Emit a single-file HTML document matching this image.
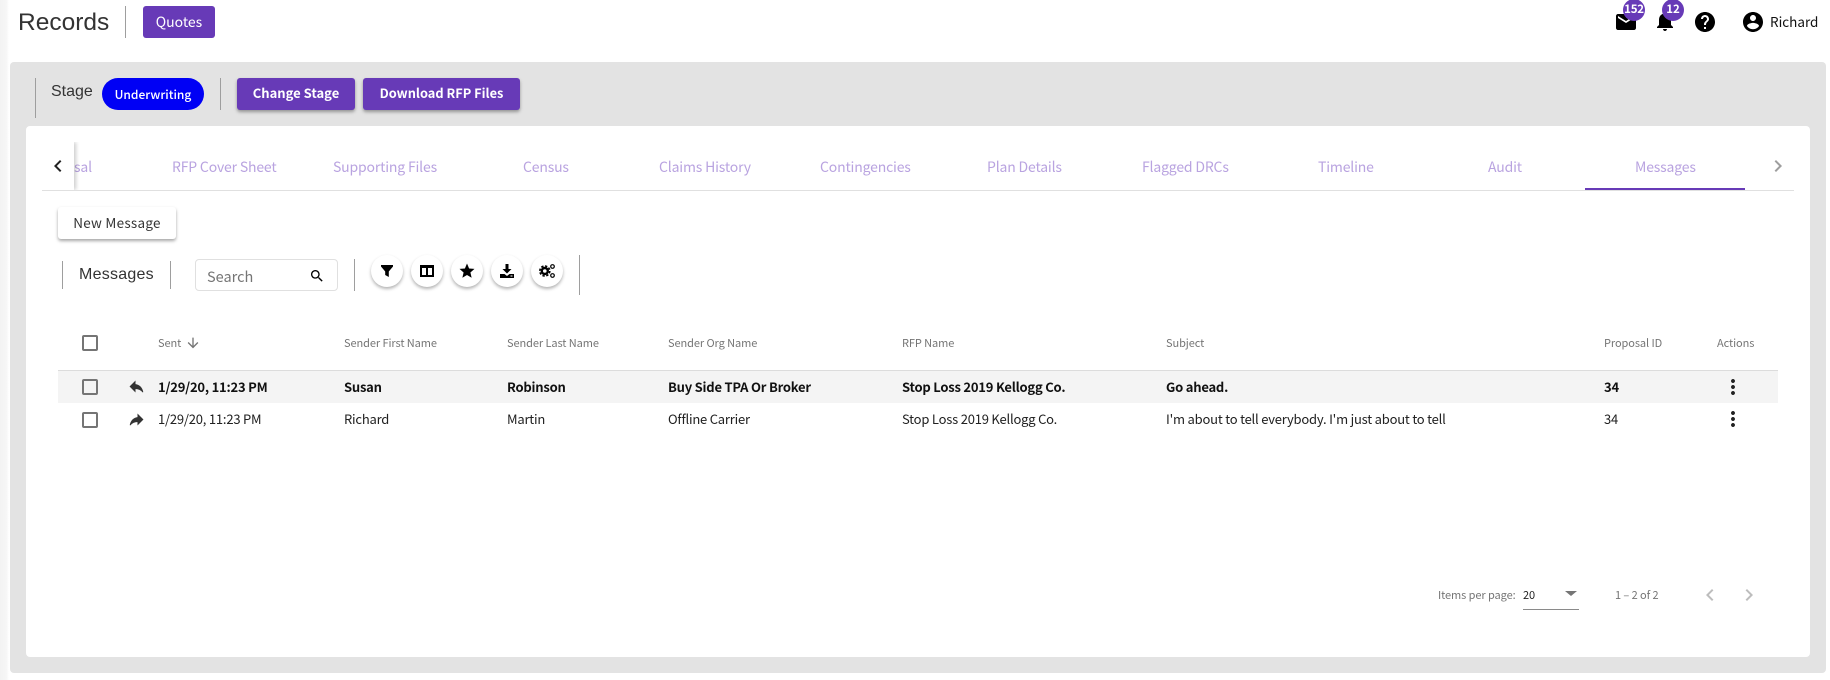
<!DOCTYPE html>
<html><head><meta charset="utf-8"><title>Records</title>
<style>
html,body{margin:0;padding:0;width:1830px;height:680px;overflow:hidden;background:#fff}
*{box-sizing:border-box}
body{position:relative;font-family:"Noto Sans CJK JP","Liberation Sans",sans-serif;color:#212121}
.a{position:absolute;white-space:nowrap}
.t{position:absolute;white-space:nowrap;line-height:20px;height:20px}
.btn{position:absolute;background:#673ab7;color:#fff;border-radius:3px;text-align:center;font-weight:500}
.sh{box-shadow:0 2px 3px rgba(0,0,0,.35)}
.div{position:absolute;width:1px;background:#9e9e9e}
.tab{position:absolute;top:157px;height:20px;line-height:20px;font-size:14px;color:#b9a3e0;white-space:nowrap;letter-spacing:-.17px}
.circ{position:absolute;top:255px;width:32px;height:32px;border-radius:50%;background:#fff;box-shadow:0 2px 3px rgba(0,0,0,.3)}
.circ svg{position:absolute;left:7px;top:7px;width:18px;height:18px}
.cb{position:absolute;left:82px;width:16px;height:16px;border:2px solid #757575;border-radius:2px}
.th{position:absolute;top:333px;height:20px;line-height:20px;font-size:11px;color:#757575;white-space:nowrap;letter-spacing:-.08px}
.td{position:absolute;height:20px;line-height:20px;font-size:13px;color:#212121;white-space:nowrap;letter-spacing:-.21px}
.b{font-weight:700;color:#111;letter-spacing:-.22px}
svg{position:absolute;display:block}
</style></head><body>
<div class="a" style="left:0;top:0;width:9px;height:680px;background:linear-gradient(90deg,#f3f3f3,#f6f6f6 70%,#fff)"></div>
<div class="t" style="left:18px;top:7px;height:32px;line-height:32px;font-family:'Liberation Sans',sans-serif;font-size:24.500px;color:#333">Records</div>
<div class="div" style="left:125px;top:6px;height:32px"></div>
<div class="btn" style="left:143px;top:6px;width:72px;height:32px;line-height:33px;font-size:14px;font-weight:400">Quotes</div>

<svg style="left:1614px;top:10px" width="24" height="24" viewBox="0 0 24 24"><path d="M20 4H4c-1.100 0-1.990.9-1.990 2L2 18c0 1.100.9 2 2 2h16c1.100 0 2-.9 2-2V6c0-1.100-.9-2-2-2zm0 4l-8 5-8-5V6l8 5 8-5v2z"/></svg>
<div class="a" style="left:1623px;top:-1px;width:22px;height:22px;border-radius:50%;background:#673ab7;color:#fff;font-size:11.500px;font-weight:700;text-align:center;line-height:21px;letter-spacing:-.2px">152</div>
<svg style="left:1653px;top:9px" width="24" height="24" viewBox="0 0 24 24"><path d="M12 22c1.100 0 2-.9 2-2h-4c0 1.100.89 2 2 2zm6-6v-5c0-3.070-1.640-5.640-4.500-6.320V4c0-.83-.67-1.500-1.500-1.500s-1.500.67-1.500 1.500v.68C7.630 5.360 6 7.920 6 11v5l-2 2v1h16v-1l-2-2z"/></svg>
<div class="a" style="left:1662px;top:-1px;width:22px;height:22px;border-radius:50%;background:#673ab7;color:#fff;font-size:11.500px;font-weight:700;text-align:center;line-height:21px">12</div>
<svg style="left:1693px;top:10px" width="24" height="24" viewBox="0 0 24 24"><path d="M12 2C6.480 2 2 6.480 2 12s4.480 10 10 10 10-4.480 10-10S17.520 2 12 2zm1 17h-2v-2h2v2zm2.070-7.750l-.9.92C13.450 12.900 13 13.500 13 15h-2v-.5c0-1.100.45-2.100 1.170-2.830l1.240-1.260c.37-.36.59-.86.59-1.410 0-1.100-.9-2-2-2s-2 .9-2 2H8c0-2.210 1.790-4 4-4s4 1.790 4 4c0 .88-.36 1.680-.93 2.250z"/></svg>
<svg style="left:1741px;top:10px" width="24" height="24" viewBox="0 0 24 24"><path d="M12 2C6.480 2 2 6.480 2 12s4.480 10 10 10 10-4.480 10-10S17.520 2 12 2zm0 3c1.660 0 3 1.340 3 3s-1.340 3-3 3-3-1.340-3-3 1.340-3 3-3zm0 14.200c-2.500 0-4.710-1.280-6-3.220.03-1.990 4-3.080 6-3.080 1.990 0 5.970 1.090 6 3.080-1.290 1.940-3.500 3.220-6 3.220z"/></svg>
<div class="t" style="left:1770px;top:11px;font-size:13.500px;color:#111">Richard</div>

<div class="a" style="left:10px;top:62px;width:1816px;height:611px;background:#e3e3e3;border-radius:4px"></div>
<div class="div" style="left:35px;top:78px;height:40px"></div>
<div class="t" style="left:51px;top:82px;font-family:'Liberation Sans',sans-serif;font-size:16px;color:#333">Stage</div>
<div class="a" style="left:102px;top:78px;width:102px;height:32px;border-radius:16px;background:#0000f5;color:#fff;font-size:12px;font-weight:500;text-align:center;line-height:33px">Underwriting</div>
<div class="div" style="left:220px;top:78px;height:32px"></div>
<div class="btn sh" style="left:237px;top:78px;width:118px;height:32px;line-height:30px;font-size:13px;font-weight:700">Change Stage</div>
<div class="btn sh" style="left:363px;top:78px;width:157px;height:32px;line-height:30px;font-size:12.800px;font-weight:700">Download RFP Files</div>

<div class="a" style="left:26px;top:126px;width:1784px;height:531px;background:#fff;border-radius:4px"></div>
<div class="a" style="left:42px;top:190px;width:1752px;height:1px;background:#e0e0e0"></div>
<div class="tab" style="left:74px">sal</div>
<div class="a" style="left:42px;top:142px;width:32px;height:48px;background:#fff;box-shadow:2px 0 4px rgba(0,0,0,.2);clip-path:inset(0 -8px 0 0)"></div>
<svg style="left:46px;top:154px" width="24" height="24" viewBox="0 0 24 24"><path d="M15.410 7.410L14 6l-6 6 6 6 1.410-1.410L10.830 12z" fill="#222"/></svg>
<div class="tab" style="left:172px">RFP Cover Sheet</div>
<div class="tab" style="left:333px">Supporting Files</div>
<div class="tab" style="left:523px">Census</div>
<div class="tab" style="left:659px">Claims History</div>
<div class="tab" style="left:820px">Contingencies</div>
<div class="tab" style="left:987px">Plan Details</div>
<div class="tab" style="left:1142px">Flagged DRCs</div>
<div class="tab" style="left:1318px">Timeline</div>
<div class="tab" style="left:1488px">Audit</div>
<div class="tab" style="left:1635px">Messages</div>
<div class="a" style="left:1585px;top:188px;width:160px;height:2px;background:#673ab7"></div>
<svg style="left:1766px;top:154px" width="24" height="24" viewBox="0 0 24 24"><path d="M10 6L8.590 7.410 13.170 12l-4.580 4.590L10 18l6-6z" fill="#9e9e9e"/></svg>

<div class="a sh" style="left:58px;top:207px;width:118px;height:32px;background:#fff;border-radius:3px;text-align:center;line-height:30px;font-size:13.500px;letter-spacing:.25px;color:#333">New Message</div>

<div class="div" style="left:62px;top:261px;height:28px"></div>
<div class="t" style="left:79px;top:265px;font-family:'Liberation Sans',sans-serif;font-size:16px;letter-spacing:.25px;color:#333">Messages</div>
<div class="div" style="left:170px;top:261px;height:28px"></div>
<div class="a" style="left:195px;top:259px;width:143px;height:32px;border:1px solid #e0e0e0;border-radius:4px"></div>
<div class="t" style="left:207px;top:267px;font-size:14.500px;color:#757575">Search</div>
<svg style="left:309px;top:268px" width="16" height="16" viewBox="0 0 24 24"><path d="M15.500 14h-.79l-.28-.27C15.410 12.590 16 11.110 16 9.500 16 5.910 13.090 3 9.500 3S3 5.910 3 9.500 5.910 16 9.500 16c1.610 0 3.090-.59 4.230-1.570l.27.28v.79l5 4.990L20.490 19l-4.990-5zm-6 0C7.010 14 5 11.990 5 9.500S7.010 5 9.500 5 14 7.010 14 9.500 11.990 14 9.500 14z"/></svg>
<div class="div" style="left:354px;top:259px;height:32px"></div>

<div class="circ" style="left:371px"><svg viewBox="0 0 18 18"><path d="M3 3h12v1.500L10.800 9.500V15L7.200 13V9.500L3 4.500z"/></svg></div>
<div class="circ" style="left:411px"><svg viewBox="0 0 18 18"><path d="M2 3h14v12H2zm2 3v7h4V6zm6 0v7h4V6z" fill-rule="evenodd"/></svg></div>
<div class="circ" style="left:451px"><svg viewBox="0 0 24 24"><path d="M12 17.270L18.180 21l-1.640-7.030L22 9.240l-7.190-.61L12 2 9.190 8.630 2 9.240l5.460 4.730L5.820 21z"/></svg></div>
<div class="circ" style="left:491px"><svg viewBox="0 0 18 18"><path d="M7.500 2h3v5h3L9 11.500 4.500 7h3zM2 12h4.500L9 14l2.500-2H16v4H2zm10.500 1.500v1h2v-1z" fill-rule="evenodd"/></svg></div>
<div class="circ" style="left:531px"><svg viewBox="0 0 18 18"><circle cx="6.800" cy="9" r="3" fill="none" stroke="#000" stroke-width="2.400"/><circle cx="6.800" cy="9" r="5" fill="none" stroke="#000" stroke-width="1.600" stroke-dasharray="2.400 1.530"/><circle cx="14.500" cy="4.500" r="1.800" fill="none" stroke="#000" stroke-width="1.200"/><circle cx="14.500" cy="13.500" r="1.800" fill="none" stroke="#000" stroke-width="1.200"/></svg></div>
<div class="div" style="left:579px;top:255px;height:40px"></div>

<div class="cb" style="top:335px"></div>
<div class="th" style="left:158px">Sent</div>
<svg style="left:185px;top:335px" width="16" height="16" viewBox="0 0 24 24"><path d="M20 12l-1.410-1.410L13 16.170V4h-2v12.170l-5.580-5.590L4 12l8 8 8-8z" fill="#757575"/></svg>
<div class="th" style="left:344px">Sender First Name</div>
<div class="th" style="left:507px">Sender Last Name</div>
<div class="th" style="left:668px">Sender Org Name</div>
<div class="th" style="left:902px">RFP Name</div>
<div class="th" style="left:1166px">Subject</div>
<div class="th" style="left:1604px">Proposal ID</div>
<div class="th" style="left:1717px">Actions</div>

<div class="a" style="left:58px;top:370px;width:1720px;height:33px;background:#f4f4f4;border-top:1px solid #dcdcdc"></div>
<div class="cb" style="top:379px"></div>
<svg style="left:128px;top:378px" width="17" height="17" viewBox="0 0 24 24"><path d="M10 9V5l-7 7 7 7v-4.100c5 0 8.500 1.600 11 5.100-1-5-4-10-11-11z" fill="#333" stroke="#333" stroke-width="1.200"/></svg>
<div class="td b" style="left:158px;top:377px">1/29/20, 11:23 PM</div>
<div class="td b" style="left:344px;top:377px">Susan</div>
<div class="td b" style="left:507px;top:377px">Robinson</div>
<div class="td b" style="left:668px;top:377px">Buy Side TPA Or Broker</div>
<div class="td b" style="left:902px;top:377px">Stop Loss 2019 Kellogg Co.</div>
<div class="td b" style="left:1166px;top:377px">Go ahead.</div>
<div class="td b" style="left:1604px;top:377px">34</div>
<svg style="left:1721px;top:375px" width="24" height="24" viewBox="0 0 24 24"><path d="M12 8c1.100 0 2-.9 2-2s-.9-2-2-2-2 .9-2 2 .9 2 2 2zm0 2c-1.100 0-2 .9-2 2s.9 2 2 2 2-.9 2-2-.9-2-2-2zm0 6c-1.100 0-2 .9-2 2s.9 2 2 2 2-.9 2-2-.9-2-2-2z" fill="#222"/></svg>

<div class="cb" style="top:412px"></div>
<svg style="left:128px;top:411px" width="17" height="17" viewBox="0 0 24 24"><path d="M14 9V5l7 7-7 7v-4.100c-5 0-8.500 1.600-11 5.100 1-5 4-10 11-11z" fill="#333" stroke="#333" stroke-width="1.200"/></svg>
<div class="td" style="left:158px;top:409px">1/29/20, 11:23 PM</div>
<div class="td" style="left:344px;top:409px">Richard</div>
<div class="td" style="left:507px;top:409px">Martin</div>
<div class="td" style="left:668px;top:409px">Offline Carrier</div>
<div class="td" style="left:902px;top:409px">Stop Loss 2019 Kellogg Co.</div>
<div class="td" style="left:1166px;top:409px">I'm about to tell everybody. I'm just about to tell</div>
<div class="td" style="left:1604px;top:409px">34</div>
<svg style="left:1721px;top:407px" width="24" height="24" viewBox="0 0 24 24"><path d="M12 8c1.100 0 2-.9 2-2s-.9-2-2-2-2 .9-2 2 .9 2 2 2zm0 2c-1.100 0-2 .9-2 2s.9 2 2 2 2-.9 2-2-.9-2-2-2zm0 6c-1.100 0-2 .9-2 2s.9 2 2 2 2-.9 2-2-.9-2-2-2z" fill="#222"/></svg>

<div class="th" style="left:1438px;top:585px">Items per page:</div>
<div class="th" style="left:1523px;top:585px;color:#212121">20</div>
<div class="a" style="left:1565px;top:591px;width:0;height:0;border-left:6px solid transparent;border-right:6px solid transparent;border-top:5px solid #757575"></div>
<div class="a" style="left:1523px;top:609px;width:56px;height:1px;background:#8a8a8a"></div>
<div class="th" style="left:1615px;top:585px">1 – 2 of 2</div>
<svg style="left:1698px;top:583px" width="24" height="24" viewBox="0 0 24 24"><path d="M15.410 7.410L14 6l-6 6 6 6 1.410-1.410L10.830 12z" fill="#bdbdbd"/></svg>
<svg style="left:1737px;top:583px" width="24" height="24" viewBox="0 0 24 24"><path d="M10 6L8.590 7.410 13.170 12l-4.580 4.590L10 18l6-6z" fill="#bdbdbd"/></svg>
</body></html>
